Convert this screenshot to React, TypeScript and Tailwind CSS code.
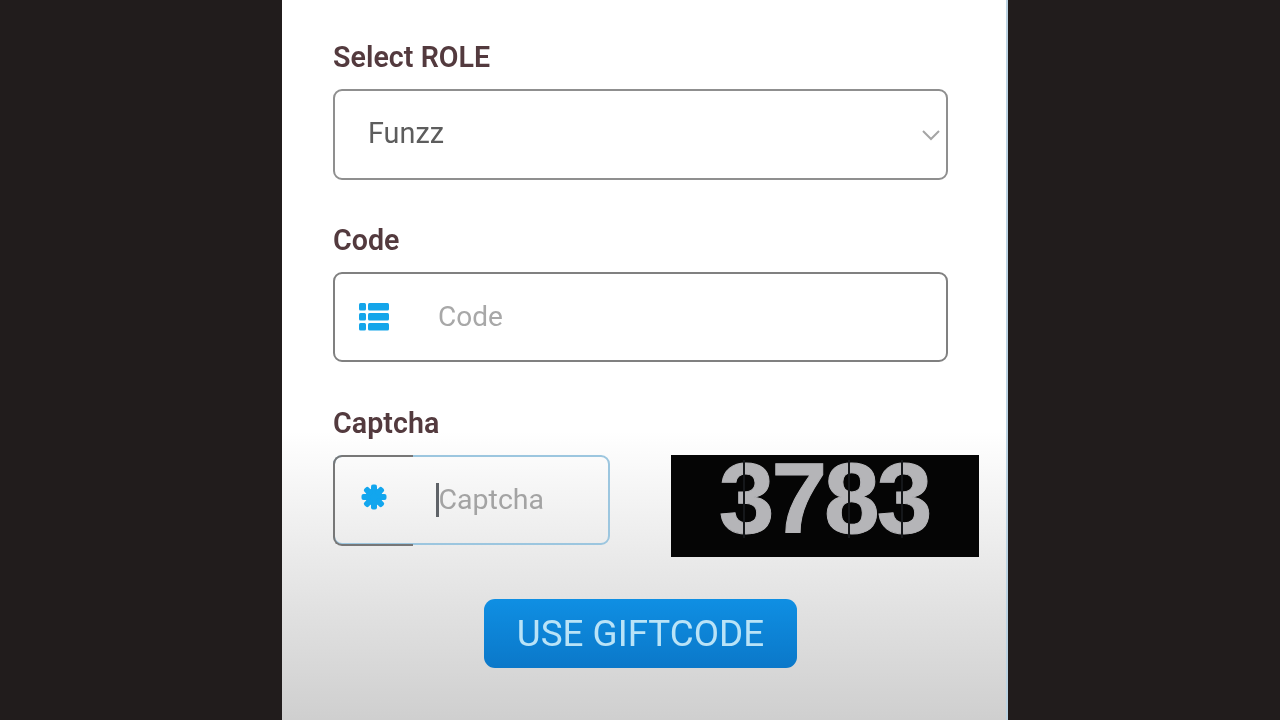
import React from "react";

const font = "font-['Roboto',sans-serif]";

function Label({ children }: { children: React.ReactNode }) {
  return <div className={`h-8 mb-4 leading-8 text-[28.6px] font-semibold tracking-[0.05px] text-[#533a3e] ${font}`}>{children}</div>;
}

function ListIcon() {
  return (
    <svg width="30" height="28" viewBox="0 0 30 28" fill="#14a5ea">
      <rect x="0" y="0" width="7" height="7.5" rx="1.5" />
      <rect x="9" y="0" width="21" height="7.5" rx="1.5" />
      <rect x="0" y="10" width="7" height="7.5" rx="1.5" />
      <rect x="9" y="10" width="21" height="7.5" rx="1.5" />
      <rect x="0" y="20" width="7" height="7.5" rx="1.5" />
      <rect x="9" y="20" width="21" height="7.5" rx="1.5" />
    </svg>
  );
}

function AsteriskIcon() {
  return (
    <svg width="26" height="26" viewBox="0 0 26 26" fill="#12a6ee">
      <circle cx="13" cy="13" r="8.5" />
      {[0, 45, 90, 135, 180, 225, 270, 315].map((a) => (
        <rect key={a} x="10" y="0.5" width="6" height="9" rx="2" transform={`rotate(${a} 13 13)`} />
      ))}
    </svg>
  );
}

function Digit({ d }: { d: string }) {
  return (
    <span className="relative inline-block">
      {d}
      {d !== "7" && <span className="absolute left-[24px] top-[9px] bottom-[7px] w-[2px] bg-[#15171a]" />}
    </span>
  );
}

export default function App() {
  return (
    <div className="w-[1280px] h-[720px] overflow-hidden bg-[#211c1c] flex pl-[282px]">
      <div className="w-[726px] h-[720px] pl-[51px] pt-[41px] bg-gradient-to-b from-white from-[60%] to-[#cfcfcf] border-r-2 border-r-[#bcd3e2] blur-[0.4px]">
        <Label>Select ROLE</Label>
        <div className="w-[615px] h-[91px] mb-[44px] rounded-[9px] border-[2.5px] border-[#8f8f8f] flex items-center justify-between pl-[33px] pr-[5px]">
          <span className={`pb-[2px] text-[28.8px] text-[#5d5d5d] ${font}`}>Funzz</span>
          <svg width="20" height="12" viewBox="0 0 20 12" fill="none" stroke="#a5a5a5" strokeWidth="2">
            <path d="M2 2l8 8 8-8" />
          </svg>
        </div>

        <Label>Code</Label>
        <div className="w-[615px] h-[90px] mb-[45px] rounded-[9px] border-[2.5px] border-[#808080] flex items-center pl-[24px]">
          <ListIcon />
          <span className={`ml-[49px] text-[28px] text-[#a8a8a8] ${font}`}>Code</span>
        </div>

        <Label>Captcha</Label>
        <div className="flex items-start">
          <div className="relative w-[277px] h-[90px] rounded-[9px] border-[2.5px] border-[#9cc6df] flex items-center pl-[26px]">
            <div className="absolute -left-[2.5px] -top-[2.5px] -bottom-[2.5px] w-[80px] rounded-l-[9px] border-[2.5px] border-r-0 border-[#777777]" />
            <div className="mb-[6px] flex"><AsteriskIcon /></div>
            <span className="ml-[49px] w-[2.5px] h-[34px] bg-[#5f6368]" />
            <span className={`text-[28.5px] text-[#a3a3a3] ${font}`}>Captcha</span>
          </div>
          <div className="ml-[61px] w-[308px] h-[102px] bg-[#050505] flex items-center justify-center pb-[16px]">
            <span className="flex text-[100px] leading-[94px] font-bold tracking-[-3px] pr-[2px] text-[#b5b5b8] [-webkit-text-stroke:1px_#b5b5b8] font-['Liberation_Sans',sans-serif]">
              <Digit d="3" />
              <Digit d="7" />
              <Digit d="8" />
              <Digit d="3" />
            </span>
          </div>
        </div>

        <div className="w-[615px] flex justify-center">
          <button className={`mt-[42px] w-[313px] h-[69px] rounded-[11px] bg-gradient-to-b from-[#0f8fe3] to-[#0b78c9] text-[36.8px] text-[#b9e3f7] ${font}`}>
            USE GIFTCODE
          </button>
        </div>
      </div>
    </div>
  );
}
